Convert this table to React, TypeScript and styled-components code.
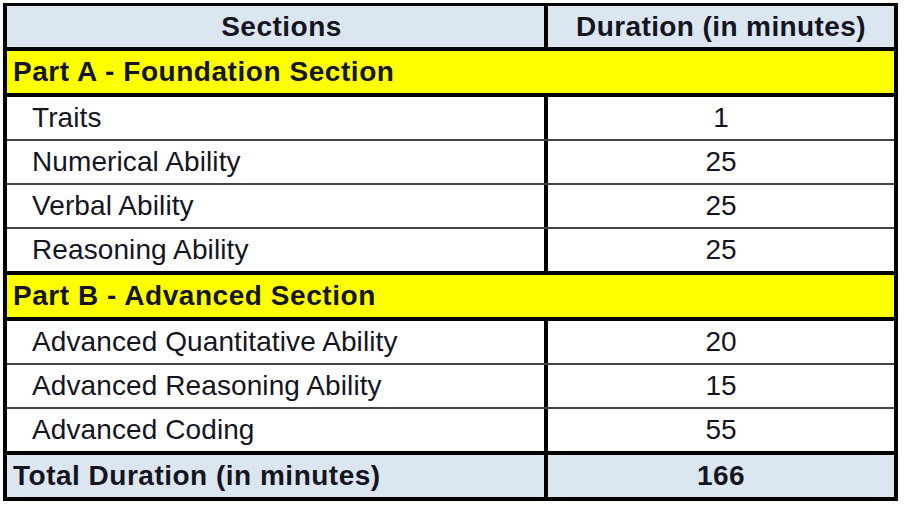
import styled, { createGlobalStyle } from 'styled-components'

const GlobalStyle = createGlobalStyle`
  body {
    margin: 0;
    background: #ffffff;
    font-family: "Liberation Sans", Arial, sans-serif;
  }
`

type Divider = 'thick' | 'thin' | 'none'
type Tone = 'plain' | 'header' | 'section'

const tones: Record<Tone, string> = {
  plain: '#ffffff',
  header: '#dce6f1',
  section: '#ffff00',
}

const Sheet = styled.div`
  width: 887px;
  margin: 3px 0 0 3px;
  border: 4px solid #000;
  border-top-width: 3px;
  display: flex;
  flex-direction: column;
  color: #15151f;
`

const Row = styled.div<{ $divider: Divider; $tone: Tone; $height?: number }>`
  display: grid;
  grid-template-columns: 541px 1fr;
  height: ${(p) => p.$height ?? 42}px;
  background: ${(p) => tones[p.$tone]};
  border-top: ${(p) =>
    p.$divider === 'thick'
      ? '4px solid #000'
      : p.$divider === 'thin'
      ? '2px solid #444'
      : 'none'};
`

const Cell = styled.div<{ $bold?: boolean; $indent?: number }>`
  display: flex;
  align-items: center;
  padding-left: ${(p) => p.$indent ?? 0}px;
  font-size: 28px;
  font-weight: ${(p) => (p.$bold ? 700 : 400)};
  letter-spacing: ${(p) => (p.$bold ? '0.5px' : '0.1px')};
  border-right: 4px solid #000;
  white-space: nowrap;
`

const ValueCell = styled.div<{ $bold?: boolean }>`
  display: flex;
  align-items: center;
  justify-content: center;
  font-size: 28px;
  font-weight: ${(p) => (p.$bold ? 700 : 400)};
  letter-spacing: ${(p) => (p.$bold ? '0.4px' : '0')};
`

const HeadCell = styled(Cell)`
  justify-content: center;
  padding-left: 12px;
`

const SectionCell = styled.div`
  grid-column: 1 / -1;
  display: flex;
  align-items: center;
  padding-left: 6px;
  font-size: 28px;
  font-weight: 700;
  letter-spacing: 0.55px;
`

interface Item {
  name: string
  minutes: number
}

interface Part {
  title: string
  items: Item[]
}

const parts: Part[] = [
  {
    title: 'Part A - Foundation Section',
    items: [
      { name: 'Traits', minutes: 1 },
      { name: 'Numerical Ability', minutes: 25 },
      { name: 'Verbal Ability', minutes: 25 },
      { name: 'Reasoning Ability', minutes: 25 },
    ],
  },
  {
    title: 'Part B - Advanced Section',
    items: [
      { name: 'Advanced Quantitative Ability', minutes: 20 },
      { name: 'Advanced Reasoning Ability', minutes: 15 },
      { name: 'Advanced Coding', minutes: 55 },
    ],
  },
]

const total = parts.reduce(
  (sum, part) => sum + part.items.reduce((s, i) => s + i.minutes, 0),
  0
)

export default function App() {
  return (
    <>
      <GlobalStyle />
      <Sheet>
        <Row $divider="none" $tone="header" $height={41}>
          <HeadCell $bold>Sections</HeadCell>
          <ValueCell $bold>Duration (in minutes)</ValueCell>
        </Row>
        {parts.map((part) => (
          <div key={part.title}>
            <Row $divider="thick" $tone="section">
              <SectionCell>{part.title}</SectionCell>
            </Row>
            {part.items.map((item, i) => (
              <Row key={item.name} $divider={i === 0 ? 'thick' : 'thin'} $tone="plain">
                <Cell $indent={25}>{item.name}</Cell>
                <ValueCell>{item.minutes}</ValueCell>
              </Row>
            ))}
          </div>
        ))}
        <Row $divider="thick" $tone="header">
          <Cell $bold $indent={6}>Total Duration (in minutes)</Cell>
          <ValueCell $bold>{total}</ValueCell>
        </Row>
      </Sheet>
    </>
  )
}
